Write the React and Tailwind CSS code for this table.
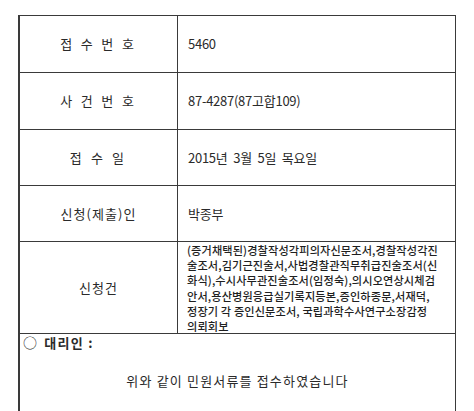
export default function App() {
  const rows = [
    { label: '접 수 번 호', value: '5460', h: 'h-[57px]', tracking: 'tracking-[0.22em]' },
    { label: '사 건 번 호', value: '87-4287(87고합109)', h: 'h-[57px]', tracking: 'tracking-[0.22em]' },
    { label: '접 수 일', value: '2015년 3월 5일 목요일', h: 'h-[56px]', tracking: 'tracking-[0.24em]' },
    { label: '신청(제출)인', value: '박종부', h: 'h-[56px]', tracking: 'tracking-[0.08em]' },
  ];
  const lines = [
    '(증거채택된)경찰작성각피의자신문조서,경찰작성각진',
    '술조서,김기근진술서,사법경찰관직무취급진술조서(신',
    '화식),수시사무관진술조서(임정숙),의시오연상시체검',
    '안서,용산병원응급실기록지등본,증인하종문,서재덕,',
    '정장기 각 증인신문조서, 국립과학수사연구소장감정',
    '의뢰회보',
  ];

  return (
    <div className="h-[411px] overflow-hidden bg-white pl-[18px] pt-[15px] font-['Noto_Sans_CJK_KR',sans-serif] text-[#2a2a2a]">
      <div className="w-[438px] border-l-2 border-r border-t border-[#3a3a3a]">
        {rows.map((r) => (
          <div key={r.label} className={`flex border-b border-[#3a3a3a] ${r.h}`}>
            <div className="flex w-[158px] shrink-0 items-center justify-center border-r border-[#3a3a3a]">
              <span className={`text-[13px] ${r.tracking}`}>{r.label}</span>
            </div>
            <div className="flex flex-1 items-center pl-[10px] text-[13px] tracking-[-0.02em] [word-spacing:3px]">{r.value}</div>
          </div>
        ))}

        <div className="flex h-[92px] border-b border-[#3a3a3a]">
          <div className="flex w-[158px] shrink-0 items-center justify-center border-r border-[#3a3a3a]">
            <span className="text-[13px] tracking-[0.08em]">신청건</span>
          </div>
          <div className="flex-1 pl-[9px] pt-px text-[11.2px] leading-[15.2px] font-medium tracking-[0.01em] text-[#1f1f1f]">
            {lines.map((l) => (
              <div key={l} className="whitespace-nowrap">{l}</div>
            ))}
          </div>
        </div>

        <div className="h-[120px]">
          <div className="flex items-center gap-[6px] pl-[3px] text-[13px] leading-[17px] font-bold tracking-[0.1em]">
            <span className="text-[14px] font-normal">○</span>
            <span>대리인 :</span>
          </div>
          <div className="mt-[20px] text-center text-[13px] tracking-[0.09em]">
            위와 같이 민원서류를 접수하였습니다
          </div>
        </div>
      </div>
    </div>
  );
}
